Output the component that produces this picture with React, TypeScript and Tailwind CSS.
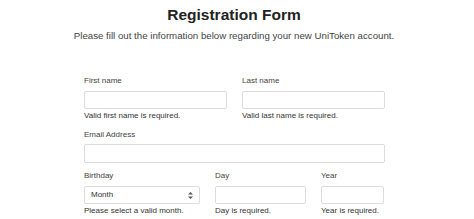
import React from "react"

const font = { fontFamily: '"Liberation Sans", Arial, sans-serif' }

function Field({ label, error, className, children }: { label: string; error?: string; className?: string; children?: React.ReactNode }) {
  return (
    <div className={className}>
      <div className="text-[8px] leading-[10px] text-[#444]">{label}</div>
      <div className="mt-[5px]">
        {children ?? <div className="h-[18px] rounded-[2px] border border-[#dcdcdc] bg-white" />}
      </div>
      {error && <div className="mt-[2px] text-[8px] leading-[10px] text-[#333]">{error}</div>}
    </div>
  )
}

export default function App() {
  return (
    <div className="h-[219px] w-[474px] overflow-hidden bg-white" style={font}>
      <div className="pr-[6px] pt-[6px] text-center">
        <h1 className="text-[15.5px] font-bold leading-[18px] text-[#222]">Registration Form</h1>
        <p className="mt-[6px] text-[9.7px] leading-[12px] text-[#444]">
          Please fill out the information below regarding your new UniToken account.
        </p>
      </div>

      <form className="ml-[84px] mt-[34px] w-[301px]">
        <div className="flex gap-[15px]">
          <Field className="flex-1" label="First name" error="Valid first name is required." />
          <Field className="flex-1" label="Last name" error="Valid last name is required." />
        </div>

        <div className="mt-[9px]">
          <div className="text-[8px] leading-[10px] text-[#444]">Email Address</div>
          <div className="mt-[4px] h-[19px] rounded-[2px] border border-[#dcdcdc] bg-white" />
        </div>

        <div className="mt-[8px] flex gap-[15px]">
          <Field className="w-[116px]" label="Birthday" error="Please select a valid month.">
            <div className="flex h-[18px] items-center justify-between rounded-[2px] border border-[#dcdcdc] bg-white px-[6px] text-[8px] text-[#333]">
              <span>Month</span>
              <svg width="5" height="7" viewBox="0 0 5 7" fill="#555">
                <path d="M2.5 0L5 2.6H0z" />
                <path d="M2.5 7L0 4.4h5z" />
              </svg>
            </div>
          </Field>
          <Field className="w-[91px]" label="Day" error="Day is required." />
          <Field className="w-[63px]" label="Year" error="Year is required." />
        </div>
      </form>
    </div>
  )
}
